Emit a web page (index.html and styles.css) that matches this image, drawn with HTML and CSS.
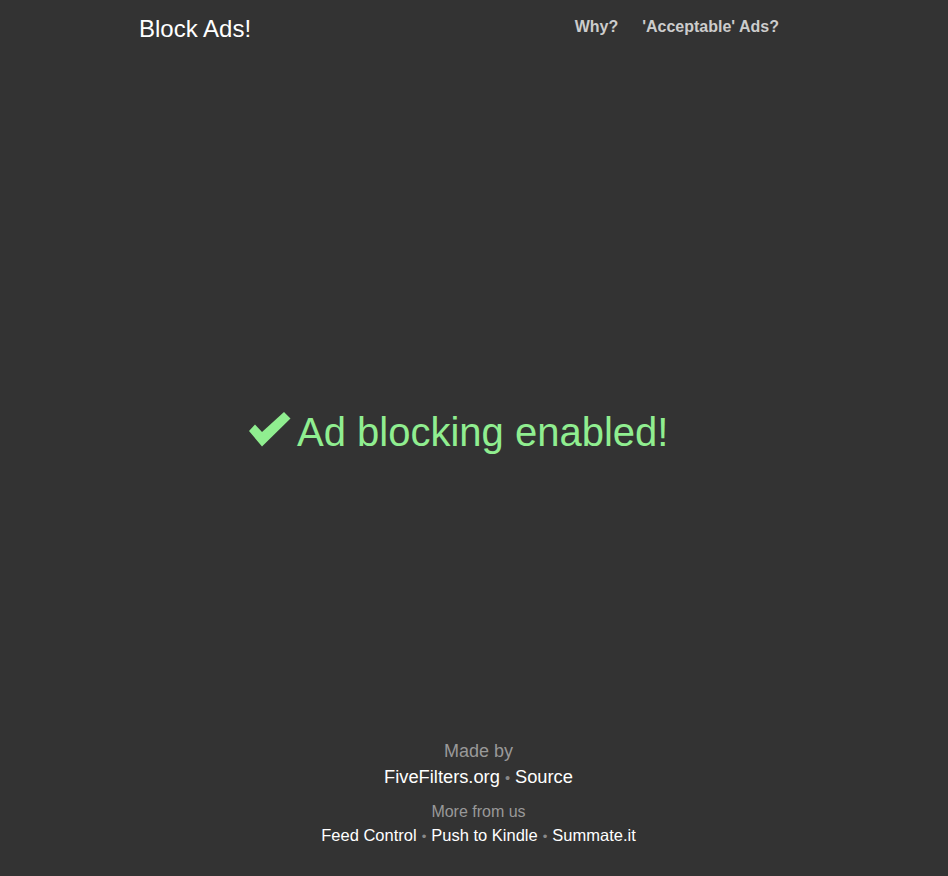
FILE: index.html
```html
<!DOCTYPE html>
<html>
<head>
<meta charset="utf-8">
<title>Block Ads!</title>
<link rel="stylesheet" href="styles.css">
</head>
<body>
<div class="page">
  <header class="nav">
    <a class="brand" href="#">Block Ads!</a>
    <nav class="links">
      <a href="#">Why?</a>
      <a href="#">'Acceptable' Ads?</a>
    </nav>
  </header>
  <main class="main">
    <h1 class="status">
      <svg class="check" viewBox="0 0 42 35" width="42" height="35"><polygon points="0,19 6,12.5 13,20 35,0 41.5,6.5 13,34.5" fill="#90ee90"/></svg>
      <span>Ad blocking enabled!</span>
    </h1>
  </main>
  <footer class="footer">
    <div class="label">Made by</div>
    <div class="row big"><a href="#">FiveFilters.org</a><span class="sep">•</span><a href="#">Source</a></div>
    <div class="label small">More from us</div>
    <div class="row"><a href="#">Feed Control</a><span class="sep">•</span><a href="#">Push to Kindle</a><span class="sep">•</span><a href="#">Summate.it</a></div>
  </footer>
</div>
</body>
</html>
```
FILE: styles.css
```css
html, body {
  margin: 0;
  padding: 0;
  background: #333333;
  font-family: "Liberation Sans", Arial, sans-serif;
}
a { text-decoration: none; }
.page {
  height: 876px;
  display: flex;
  flex-direction: column;
}
.nav {
  display: flex;
  justify-content: space-between;
  align-items: flex-start;
  padding: 15px 169px 0 139px;
}
.brand {
  color: #ffffff;
  font-size: 24px;
  line-height: 28px;
}
.links {
  display: flex;
  gap: 24px;
  padding-top: 2px;
}
.links a {
  color: #cccccc;
  font-weight: bold;
  font-size: 16px;
  line-height: 20px;
}
.main {
  flex: 1;
  display: flex;
  align-items: flex-start;
  padding: 365px 0 0 249px;
}
.status {
  margin: 0;
  display: flex;
  align-items: center;
  gap: 6px;
  color: #90ee90;
  font-weight: normal;
  font-size: 40px;
  line-height: 48px;
}
.check { margin-top: -6px; }
.footer {
  display: flex;
  flex-direction: column;
  align-items: center;
  padding: 0 0 29px 9px;
}
.label {
  color: #999999;
  font-size: 18px;
  line-height: 22px;
}
.label.small {
  font-size: 16px;
  line-height: 20px;
  margin-top: 10px;
  margin-bottom: 3px;
}
.row {
  color: #ffffff;
  font-size: 16.5px;
  line-height: 20px;
  display: flex;
  align-items: baseline;
}
.row.big {
  font-size: 18.3px;
  line-height: 28px;
  margin-top: 1px;
}
.row a { color: #ffffff; }
.sep {
  color: #888888;
  margin: 0 5px;
  font-size: 0.8em;
}
```
